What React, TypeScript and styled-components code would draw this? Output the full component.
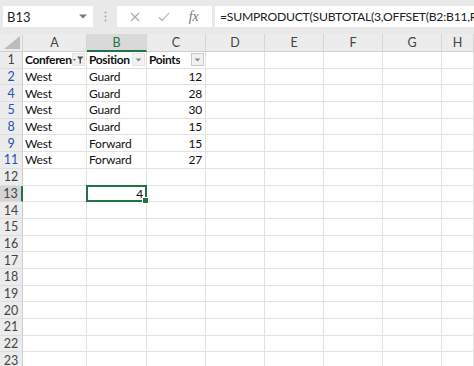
import React from "react";
import styled, { createGlobalStyle, css } from "styled-components";

const GlobalStyle = createGlobalStyle`
  html, body { margin: 0; padding: 0; background: #ffffff; }
  body { font-family: Lato, "Noto Sans", sans-serif; }
`;

const GREEN = "#217346";
const GRID = "#e2e2e2";
const COLS = "23px 64px 60px 59px 59px 59px 59px 59px 32px";
const ROW_H = 16.7;

const Screen = styled.div`
  width: 474px;
  height: 366px;
  overflow: hidden;
  display: flex;
  flex-direction: column;
  background: #ffffff;
`;

const FormulaBar = styled.div`
  height: 34px;
  flex-shrink: 0;
  background: #e9e9e9;
  display: flex;
  align-items: flex-start;
  padding-top: 6px;
  box-sizing: border-box;
`;

const NameBox = styled.div`
  margin-left: 3px;
  width: 90px;
  height: 21px;
  background: #ffffff;
  display: flex;
  align-items: center;
  justify-content: space-between;
  padding: 0 6px 0 4px;
  box-sizing: border-box;
  font-size: 13px;
  color: #222;
`;

const Separator = styled.div`
  width: 24px;
  height: 21px;
  display: flex;
  align-items: center;
  justify-content: center;
`;

const ButtonsBox = styled.div`
  width: 95px;
  height: 21px;
  background: #ffffff;
  display: flex;
  align-items: center;
  justify-content: space-around;
  padding: 0 4px;
  box-sizing: border-box;
`;

const FxText = styled.span`
  font-family: "Liberation Serif", serif;
  font-style: italic;
  font-size: 14px;
  color: #777;
`;

const FormulaInput = styled.div`
  margin-left: 3px;
  flex: 1;
  min-width: 0;
  height: 21px;
  background: #ffffff;
  display: flex;
  align-items: center;
  padding-left: 5px;
  white-space: nowrap;
  overflow: hidden;
  font-size: 12.2px;
  letter-spacing: -0.24px;
  color: #222;
`;

const Sheet = styled.div`
  display: flex;
  flex-direction: column;
`;

const HeaderRow = styled.div`
  display: grid;
  grid-template-columns: ${COLS};
  height: 18px;
  background: #ececec;
  border-bottom: 1px solid #cfcfcf;
  box-sizing: border-box;
`;

const ColHeader = styled.div<{ $active?: boolean }>`
  display: flex;
  align-items: center;
  justify-content: center;
  font-size: 12.5px;
  color: #444;
  border-right: 1px solid #d6d6d6;
  box-sizing: border-box;
  ${(p) =>
    p.$active &&
    css`
      background: #d9d9d9;
      color: ${GREEN};
      border-bottom: 2px solid ${GREEN};
      margin-bottom: -1px;
    `}
`;

const Corner = styled.div`
  display: flex;
  align-items: flex-end;
  justify-content: flex-end;
  padding: 0 2px 2px 0;
  box-sizing: border-box;
  border-right: 1px solid #d6d6d6;
`;

const Row = styled.div`
  display: grid;
  grid-template-columns: ${COLS};
  height: ${ROW_H}px;
`;

const RowHeader = styled.div<{ $filtered?: boolean; $active?: boolean }>`
  display: flex;
  align-items: center;
  justify-content: center;
  font-size: 12.5px;
  color: ${(p) => (p.$filtered ? "#2d4fb8" : "#444")};
  background: ${(p) => (p.$active ? "#d4d4d4" : "#ececec")};
  border-right: ${(p) => (p.$active ? `2px solid ${GREEN}` : "1px solid #cfcfcf")};
  border-bottom: 1px solid #dedede;
  box-sizing: border-box;
`;

const Cell = styled.div<{ $num?: boolean; $bold?: boolean; $selected?: boolean }>`
  position: relative;
  display: flex;
  align-items: center;
  justify-content: ${(p) => (p.$num ? "flex-end" : "flex-start")};
  padding: 0 3px 0 2px;
  box-sizing: border-box;
  border-right: 1px solid ${GRID};
  border-bottom: 1px solid ${GRID};
  font-size: 12px;
  letter-spacing: ${(p) => (p.$bold ? "-0.35px" : "-0.15px")};
  font-weight: ${(p) => (p.$bold ? 700 : 400)};
  color: #111;
  white-space: nowrap;
  min-width: 0;
  ${(p) =>
    p.$selected &&
    css`
      &::after {
        content: "";
        position: absolute;
        left: -1px;
        top: -1px;
        right: -1px;
        bottom: -1px;
        border: 2px solid ${GREEN};
        pointer-events: none;
      }
    `}
`;

const CellText = styled.span`
  overflow: hidden;
  min-width: 0;
  flex: 0 1 auto;
`;

const FillHandle = styled.span`
  position: absolute;
  right: -3px;
  bottom: -3px;
  width: 5px;
  height: 5px;
  background: ${GREEN};
  border: 1px solid #fff;
  z-index: 2;
`;

const FilterButton = styled.span<{ $framed?: boolean }>`
  flex-shrink: 0;
  width: 13px;
  height: 13px;
  margin-left: auto;
  margin-right: -2px;
  background: #f1f1f1;
  border: 1px solid ${(p) => (p.$framed ? "#c9c9c9" : "#e4e4e4")};
  box-sizing: border-box;
  display: flex;
  align-items: center;
  justify-content: center;
`;

const ArrowIcon = () => (
  <svg width="7" height="4" viewBox="0 0 7 4">
    <path d="M0.5 0.5 L6.5 0.5 L3.5 3.5 Z" fill="#8a8a8a" />
  </svg>
);

const FunnelIcon = () => (
  <svg width="11" height="8" viewBox="0 0 11 8">
    <path d="M0 3 L3 3 L1.5 5 Z" fill="#6a6a6a" />
    <path d="M4 0.5 L10.5 0.5 L8 3.5 L8 7.5 L6.5 7.5 L6.5 3.5 Z" fill="#555" />
  </svg>
);

const CornerTriangle = () => (
  <svg width="16" height="13" viewBox="0 0 16 13">
    <path d="M16 0 L16 13 L0 13 Z" fill="#bdbdbd" />
  </svg>
);

const NameArrow = () => (
  <svg width="8" height="5" viewBox="0 0 8 5">
    <path d="M0 0.5 L8 0.5 L4 4.5 Z" fill="#7a7a7a" />
  </svg>
);

const Dots = () => (
  <svg width="3" height="11" viewBox="0 0 3 11">
    <circle cx="1.5" cy="1.5" r="1" fill="#a8a8a8" />
    <circle cx="1.5" cy="5.5" r="1" fill="#a8a8a8" />
    <circle cx="1.5" cy="9.5" r="1" fill="#a8a8a8" />
  </svg>
);

const CrossIcon = () => (
  <svg width="10" height="10" viewBox="0 0 10 10">
    <path d="M1 1 L9 9 M9 1 L1 9" stroke="#a9a9a9" strokeWidth="1.1" />
  </svg>
);

const CheckIcon = () => (
  <svg width="12" height="10" viewBox="0 0 12 10">
    <path d="M1 5.5 L4.2 8.5 L11 1" stroke="#a9a9a9" strokeWidth="1.1" fill="none" />
  </svg>
);

const columns = ["A", "B", "C", "D", "E", "F", "G", "H"];

type DataRow = { n: number; a: string; b: string; c: string };
const data: DataRow[] = [
  { n: 2, a: "West", b: "Guard", c: "12" },
  { n: 4, a: "West", b: "Guard", c: "28" },
  { n: 5, a: "West", b: "Guard", c: "30" },
  { n: 8, a: "West", b: "Guard", c: "15" },
  { n: 9, a: "West", b: "Forward", c: "15" },
  { n: 11, a: "West", b: "Forward", c: "27" },
];

const emptyRows = Array.from({ length: 12 }, (_, i) => 12 + i);

const EmptyCells = ({ count }: { count: number }) => (
  <>
    {Array.from({ length: count }, (_, i) => (
      <Cell key={i} />
    ))}
  </>
);

export default function App() {
  return (
    <Screen>
      <GlobalStyle />
      <FormulaBar>
        <NameBox>
          <span>B13</span>
          <NameArrow />
        </NameBox>
        <Separator>
          <Dots />
        </Separator>
        <ButtonsBox>
          <CrossIcon />
          <CheckIcon />
          <FxText>fx</FxText>
        </ButtonsBox>
        <FormulaInput>=SUMPRODUCT(SUBTOTAL(3,OFFSET(B2:B11,RO</FormulaInput>
      </FormulaBar>
      <Sheet>
        <HeaderRow>
          <Corner>
            <CornerTriangle />
          </Corner>
          {columns.map((c) => (
            <ColHeader key={c} $active={c === "B"}>
              {c}
            </ColHeader>
          ))}
        </HeaderRow>
        <Row>
          <RowHeader>1</RowHeader>
          <Cell $bold>
            <CellText>Conference</CellText>
            <FilterButton>
              <FunnelIcon />
            </FilterButton>
          </Cell>
          <Cell $bold>
            <CellText>Position</CellText>
            <FilterButton>
              <ArrowIcon />
            </FilterButton>
          </Cell>
          <Cell $bold>
            <CellText>Points</CellText>
            <FilterButton $framed>
              <ArrowIcon />
            </FilterButton>
          </Cell>
          <EmptyCells count={5} />
        </Row>
        {data.map((r) => (
          <Row key={r.n}>
            <RowHeader $filtered>{r.n}</RowHeader>
            <Cell>{r.a}</Cell>
            <Cell>{r.b}</Cell>
            <Cell $num>{r.c}</Cell>
            <EmptyCells count={5} />
          </Row>
        ))}
        {emptyRows.map((n) => (
          <Row key={n}>
            <RowHeader $active={n === 13}>{n}</RowHeader>
            <Cell />
            {n === 13 ? (
              <Cell $num $selected>
                4
                <FillHandle />
              </Cell>
            ) : (
              <Cell />
            )}
            <EmptyCells count={6} />
          </Row>
        ))}
      </Sheet>
    </Screen>
  );
}
